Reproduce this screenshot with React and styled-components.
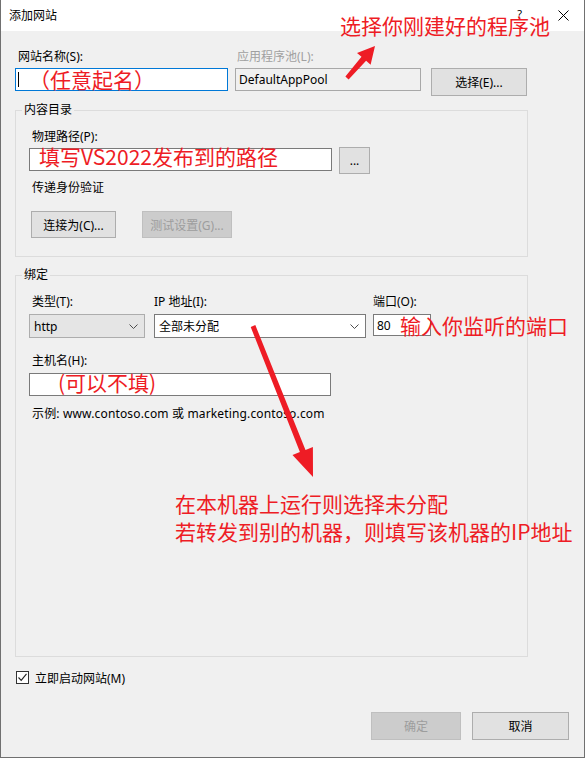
import React from 'react';
import styled, { createGlobalStyle } from 'styled-components';

const GlobalStyle = createGlobalStyle`
  html, body {
    margin: 0;
    padding: 0;
    background: #f0f0f0;
  }
  body {
    font-family: "Noto Sans", "Noto Sans CJK SC", sans-serif;
    font-size: 12px;
    color: #000;
  }
  * {
    box-sizing: border-box;
  }
`;

const RED = '#ee1c25';

const Window = styled.div`
  position: relative;
  width: 585px;
  height: 758px;
  display: flex;
  flex-direction: column;
  background: #f0f0f0;
  border: 1px solid #707070;
  border-top: none;
  overflow: hidden;
`;

const TitleBar = styled.div`
  height: 31px;
  flex: none;
  display: flex;
  align-items: center;
  background: #fff;
  padding-left: 8px;
`;

const Title = styled.span`
  flex: 1;
  font-size: 12px;
  line-height: 16px;
`;

const Help = styled.span`
  font-size: 11px;
  line-height: 12px;
  margin-right: 36px;
  margin-top: -3px;
`;

const Close = styled.svg`
  width: 11px;
  height: 11px;
  margin-right: 15px;
`;

const Body = styled.div`
  flex: 1;
  display: flex;
  flex-direction: column;
  padding: 18px 15px 17px 14px;
`;

const Row = styled.div`
  display: flex;
  align-items: flex-start;
  margin-top: ${({ top }) => top || 0}px;
`;

const Field = styled.div`
  width: ${({ width }) => width}px;
  margin-right: ${({ gapRight }) => gapRight || 0}px;
  display: flex;
  flex-direction: column;
  gap: ${({ gap }) => (gap === undefined ? 3 : gap)}px;
`;

const Label = styled.div`
  height: 16px;
  line-height: 16px;
  white-space: nowrap;
  padding-left: ${({ indent }) => (indent === undefined ? 3 : indent)}px;
  margin-top: ${({ top }) => top || 0}px;
  color: ${({ disabled }) => (disabled ? '#a0a0a0' : '#000')};
`;

const Example = styled(Label)`
  letter-spacing: 0.15px;
`;

const TextBox = styled.div`
  width: ${({ width }) => (width ? `${width}px` : 'auto')};
  height: ${({ height }) => height || 23}px;
  margin-top: ${({ top }) => top || 0}px;
  display: flex;
  align-items: center;
  padding-left: 3px;
  background: ${({ readOnly }) => (readOnly ? '#f0f0f0' : '#fff')};
  border: 1px solid
    ${({ focused, readOnly }) => (focused ? '#0078d7' : readOnly ? '#a8a8a8' : '#7a7a7a')};
  white-space: nowrap;
`;

const Caret = styled.span`
  width: 1px;
  height: 15px;
  background: #000;
  margin-left: -1px;
`;

const Select = styled.div`
  height: 24px;
  display: flex;
  align-items: center;
  justify-content: space-between;
  padding: 0 6px 0 4px;
  background: ${({ flat }) => (flat ? '#e5e5e5' : '#fff')};
  border: 1px solid ${({ flat }) => (flat ? '#adadad' : '#7a7a7a')};
`;

const Chevron = styled.svg`
  width: 9px;
  height: 5px;
`;

const Button = styled.button`
  width: ${({ width }) => width}px;
  height: ${({ height }) => height || 28}px;
  margin: ${({ top }) => top || 0}px 0 0 ${({ left }) => left || 0}px;
  padding: 0;
  font: inherit;
  font-size: 12px;
  color: ${({ disabled }) => (disabled ? '#9d9d9d' : '#000')};
  background: ${({ disabled }) => (disabled ? '#cccccc' : '#e1e1e1')};
  border: 1px solid ${({ disabled }) => (disabled ? '#bfbfbf' : '#adadad')};
  border-radius: 0;
`;

const Group = styled.fieldset`
  width: 513px;
  margin: ${({ top }) => top}px 0 0 0;
  padding: 0 0 ${({ bottom }) => bottom || 0}px 13px;
  border: 1px solid #dcdcdc;
  min-width: 0;
  display: flex;
  flex-direction: column;
  flex: ${({ grow }) => (grow ? 1 : 'none')};
`;

const Legend = styled.legend`
  padding: 0 2px;
  margin-left: -7px;
  line-height: 16px;
  height: 16px;
`;

const CheckRow = styled.label`
  display: flex;
  align-items: center;
  gap: 6px;
  height: 13px;
  margin-top: 14px;
  padding-left: 1px;
`;

const CheckBox = styled.span`
  width: 13px;
  height: 13px;
  border: 1px solid #333;
  background: #fff;
  display: flex;
  align-items: center;
  justify-content: center;
`;

const Footer = styled.div`
  display: flex;
  justify-content: flex-end;
  gap: 11px;
  margin-top: 28px;
`;

const Note = styled.div`
  position: absolute;
  left: ${({ x }) => x}px;
  top: ${({ y }) => y}px;
  font-family: "Noto Sans CJK SC", sans-serif;
  font-size: 21px;
  line-height: ${({ lh }) => lh || 21}px;
  color: ${RED};
  white-space: nowrap;
  pointer-events: none;
`;

const Overlay = styled.svg`
  position: absolute;
  left: -1px;
  top: 0;
  width: 585px;
  height: 758px;
  pointer-events: none;
`;

const Down = () => (
  <Chevron viewBox="0 0 9 5">
    <path d="M0.5 0.5 L4.5 4.5 L8.5 0.5" fill="none" stroke="#4d4d4d" strokeWidth="1" />
  </Chevron>
);

export default function App() {
  return (
    <>
      <GlobalStyle />
      <Window>
        <TitleBar>
          <Title>添加网站</Title>
          <Help>?</Help>
          <Close viewBox="0 0 11 11">
            <path d="M0.5 0.5 L10.5 10.5 M10.5 0.5 L0.5 10.5" stroke="#000" strokeWidth="1" />
          </Close>
        </TitleBar>

        <Body>
          <Row>
            <Field width={213} gapRight={7}>
              <Label>网站名称(S):</Label>
              <TextBox focused>
                <Caret />
              </TextBox>
            </Field>
            <Field width={186} gapRight={10}>
              <Label disabled indent={2}>应用程序池(L):</Label>
              <TextBox readOnly>DefaultAppPool</TextBox>
            </Field>
            <Button width={96} top={19}>选择(E)...</Button>
          </Row>

          <Group top={6} bottom={18}>
            <Legend>内容目录</Legend>
            <Label top={11}>物理路径(P):</Label>
            <Row top={2}>
              <TextBox width={303} top={1} />
              <Button width={31} height={27} left={7}>...</Button>
            </Row>
            <Label top={6}>传递身份验证</Label>
            <Row top={15}>
              <Button width={85} height={27} left={2}>连接为(C)...</Button>
              <Button width={90} height={27} left={26} disabled>测试设置(G)...</Button>
            </Row>
          </Group>

          <Group top={10} grow>
            <Legend>绑定</Legend>
            <Row top={11}>
              <Field width={116} gapRight={9} gap={4}>
                <Label>类型(T):</Label>
                <Select flat>
                  http
                  <Down />
                </Select>
              </Field>
              <Field width={212} gapRight={7} gap={4}>
                <Label indent={0}>IP 地址(I):</Label>
                <Select>
                  全部未分配
                  <Down />
                </Select>
              </Field>
              <Field width={58} gap={4}>
                <Label indent={0}>端口(O):</Label>
                <TextBox height={22}>80</TextBox>
              </Field>
            </Row>
            <Field width={302} gap={4}>
              <Label top={15}>主机名(H):</Label>
              <TextBox />
            </Field>
            <Example top={10}>示例: www.contoso.com 或 marketing.contoso.com</Example>
          </Group>

          <CheckRow>
            <CheckBox>
              <svg width="11" height="11" viewBox="0 0 11 11">
                <path d="M1.5 5.5 L4.2 8.3 L9.5 1.8" fill="none" stroke="#222" strokeWidth="1.1" />
              </svg>
            </CheckBox>
            立即启动网站(M)
          </CheckRow>

          <Footer>
            <Button width={90} disabled>确定</Button>
            <Button width={97}>取消</Button>
          </Footer>
        </Body>

        <Note x={339} y={15}>选择你刚建好的程序池</Note>
        <Note x={28} y={69}>（任意起名）</Note>
        <Note x={38} y={146}>填写VS2022发布到的路径</Note>
        <Note x={399} y={315}>输入你监听的端口</Note>
        <Note x={57} y={372}>(可以不填)</Note>
        <Note x={174} y={489} lh={28}>
          在本机器上运行则选择未分配
          <br />
          若转发到别的机器，则填写该机器的IP地址
        </Note>

        <Overlay viewBox="0 0 585 758">
          <polygon
            fill={RED}
            points="348.6,79.6 366.1,60.8 370.6,64.7 375,46 357.0,52.9 361.5,56.8 345.4,76.6"
          />
          <polygon
            fill={RED}
            points="255.3,325.1 305.5,449.9 312.9,446.9 313,477 292.5,455.1 299.9,452.1 250.7,326.9"
          />
        </Overlay>
      </Window>
    </>
  );
}
